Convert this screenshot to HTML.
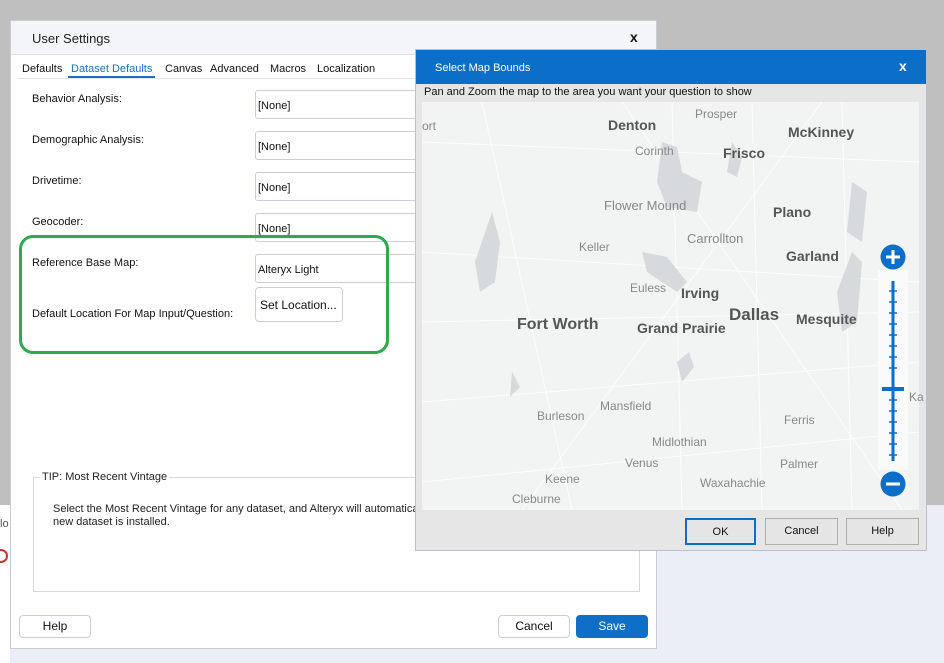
<!DOCTYPE html>
<html><head><meta charset="utf-8"><style>
*{margin:0;padding:0;box-sizing:border-box}
body{width:944px;height:663px;position:relative;overflow:hidden;background:#eceef7;font-family:"Liberation Sans",sans-serif;font-size:11px;color:#111}
.a{position:absolute}
.lbl{position:absolute;left:32px;font-size:11px}
.box{position:absolute;left:255px;width:170px;height:29px;border:1px solid #ccd;border-radius:3px;background:#fff;padding:9px 2px;font-size:11px}
.city{position:absolute;color:#555;font-size:14px;font-weight:bold;white-space:nowrap}
.sm{color:#888;font-weight:normal;font-size:12px}
.btn{position:absolute;height:27px;background:#e5e5e5;border:1px solid #adadad;font-size:11px;text-align:center;line-height:25px}
</style></head><body>
<div class="a" style="left:0;top:0;width:944px;height:505px;background:#bfbfbf"></div>
<div class="a" style="left:0;top:505px;width:10px;height:158px;background:#fff"></div>
<!-- user settings -->
<div class="a" style="left:10px;top:20px;width:647px;height:629px;background:#fff;border:1px solid #c8ccd8"></div>
<div class="a" style="left:11px;top:21px;width:645px;height:34px;background:#f3f5f9;border-bottom:1px solid #dde"></div>
<div class="a" style="left:32px;top:31px;font-size:13px;color:#222">User Settings</div>
<div class="a" style="left:630px;top:29px;font-size:14px;font-weight:bold">x</div>
<div class="a" style="left:17px;top:78px;width:400px;border-top:1px solid #e2e4ea"></div>
<div class="a" style="left:22px;top:63px;font-size:11px">Defaults</div>
<div class="a" style="left:68px;top:63px;font-size:11px;color:#1a6fc4;border-bottom:2px solid #1a6fc4;padding:0 3px 1px">Dataset Defaults</div>
<div class="a" style="left:165px;top:63px;font-size:11px">Canvas</div>
<div class="a" style="left:210px;top:63px;font-size:11px">Advanced</div>
<div class="a" style="left:270px;top:63px;font-size:11px">Macros</div>
<div class="a" style="left:317px;top:63px;font-size:11px">Localization</div>
<div class="lbl" style="top:93px">Behavior Analysis:</div><div class="box" style="top:90px">[None]</div>
<div class="lbl" style="top:134px">Demographic Analysis:</div><div class="box" style="top:131px">[None]</div>
<div class="lbl" style="top:175px">Drivetime:</div><div class="box" style="top:172px">[None]</div>
<div class="lbl" style="top:216px">Geocoder:</div><div class="box" style="top:213px">[None]</div>
<div class="lbl" style="top:257px">Reference Base Map:</div><div class="box" style="top:254px">Alteryx Light</div>
<div class="lbl" style="top:308px">Default Location For Map Input/Question:</div>
<div class="a" style="left:255px;top:287px;width:88px;height:35px;border:1px solid #ccd;border-radius:4px;background:#fff;font-size:12px;padding:10px 4px">Set Location...</div>
<div class="a" style="left:19px;top:235px;width:370px;height:119px;border:3px solid #2bab4a;border-radius:14px"></div>
<div class="a" style="left:33px;top:477px;width:607px;height:115px;border:1px solid #d8d8d8"></div>
<div class="a" style="left:40px;top:471px;background:#fff;padding:0 2px;font-size:11px;color:#222">TIP: Most Recent Vintage</div>
<div class="a" style="left:53px;top:503px;font-size:11px;line-height:13px;color:#222">Select the Most Recent Vintage for any dataset, and Alteryx will automatically<br>new dataset is installed.</div>
<div class="a" style="left:19px;top:615px;width:72px;height:23px;border:1px solid #ccd;border-radius:4px;text-align:center;line-height:21px;font-size:12px">Help</div>
<div class="a" style="left:498px;top:615px;width:72px;height:23px;border:1px solid #ccd;border-radius:4px;text-align:center;line-height:21px;font-size:12px">Cancel</div>
<div class="a" style="left:576px;top:615px;width:72px;height:23px;background:#0f6fc6;border-radius:4px;color:#fff;text-align:center;line-height:23px;font-size:12px">Save</div>
<div class="a" style="left:0;top:518px;font-size:11px;color:#555">lo</div>
<div class="a" style="left:-6px;top:549px;width:14px;height:14px;border:2px solid #c33;border-radius:50%"></div>
<!-- map dialog -->
<div class="a" style="left:415px;top:49px;width:512px;height:502px;background:#e6e6e6;border:1px solid #b8c0d0"></div>
<div class="a" style="left:416px;top:50px;width:510px;height:34px;background:#0b6ec9"></div>
<div class="a" style="left:435px;top:62px;color:#fff;font-size:11px">Select Map Bounds</div>
<div class="a" style="left:899px;top:58px;color:#fff;font-size:14px;font-weight:bold">x</div>
<div class="a" style="left:424px;top:86px;font-size:11px">Pan and Zoom the map to the area you want your question to show</div>
<div class="a" style="left:422px;top:102px;width:497px;height:408px;background:#f2f3f3;overflow:hidden">
<svg width="497" height="408" style="position:absolute;left:0;top:0">
<g stroke="#fff" stroke-width="1" fill="none" opacity="0.8">
<path d="M0 40 L497 60 M0 150 L497 180 M0 300 L497 260 M60 0 L150 408 M250 0 L260 408 M330 0 L340 408 M0 220 L497 210 M100 408 L400 0 M200 0 L480 408 M0 380 L497 330 M420 0 L430 408"/>
</g>
<g fill="#d6dadc">
<path d="M240 40 l15 5 l5 25 l20 10 l-5 30 l-30 -5 l-10 -25 z"/>
<path d="M310 40 l10 15 l-5 20 l-10 -5 z"/>
<path d="M220 150 l25 5 l20 25 l-10 10 l-30 -20 z"/>
<path d="M70 110 l8 30 l-5 40 l-15 10 l-5 -30 z"/>
<path d="M430 80 l15 10 l-5 50 l-15 -10 z"/>
<path d="M430 150 l10 10 l-5 60 l-15 10 l-5 -40 z"/>
<path d="M255 260 l12 -10 l5 15 l-12 15 z"/>
<path d="M90 270 l8 15 l-10 10 z"/>
</g>
</svg>
</div>
<div class="city" style="left:608px;top:117px">Denton</div>
<div class="city sm" style="left:695px;top:107px">Prosper</div>
<div class="city" style="left:788px;top:124px">McKinney</div>
<div class="city sm" style="left:635px;top:144px">Corinth</div>
<div class="city" style="left:723px;top:145px">Frisco</div>
<div class="city sm" style="left:604px;top:198px;font-size:13px">Flower Mound</div>
<div class="city" style="left:773px;top:204px">Plano</div>
<div class="city sm" style="left:687px;top:231px;font-size:13px">Carrollton</div>
<div class="city sm" style="left:579px;top:240px">Keller</div>
<div class="city" style="left:786px;top:248px">Garland</div>
<div class="city sm" style="left:630px;top:281px">Euless</div>
<div class="city" style="left:681px;top:285px">Irving</div>
<div class="city" style="left:729px;top:305px;font-size:17px">Dallas</div>
<div class="city" style="left:796px;top:311px">Mesquite</div>
<div class="city" style="left:517px;top:316px;font-size:16px">Fort Worth</div>
<div class="city" style="left:637px;top:320px">Grand Prairie</div>
<div class="city sm" style="left:600px;top:399px">Mansfield</div>
<div class="city sm" style="left:537px;top:409px">Burleson</div>
<div class="city sm" style="left:784px;top:413px">Ferris</div>
<div class="city sm" style="left:652px;top:435px">Midlothian</div>
<div class="city sm" style="left:625px;top:456px">Venus</div>
<div class="city sm" style="left:780px;top:457px">Palmer</div>
<div class="city sm" style="left:545px;top:472px">Keene</div>
<div class="city sm" style="left:700px;top:476px">Waxahachie</div>
<div class="city sm" style="left:512px;top:492px">Cleburne</div>
<div class="city sm" style="left:422px;top:119px">ort</div>
<div class="city sm" style="left:909px;top:390px">Ka</div>
<div class="a" style="left:878px;top:270px;width:30px;height:200px;background:#fafafa"></div>
<svg class="a" style="left:878px;top:243px" width="32" height="256">
<circle cx="15" cy="14" r="12.5" fill="#0b6ec9"/><path d="M8 14h14M15 7v14" stroke="#fff" stroke-width="3"/>
<path d="M15 38V218" stroke="#0b6ec9" stroke-width="3"/>
<g stroke="#0b6ec9" stroke-width="1.5"><path d="M11 48h8M11 59h8M11 70h8M11 81h8M11 92h8M11 103h8M11 114h8M11 125h8M11 157h8M11 168h8M11 179h8M11 190h8M11 201h8M11 212h8"/></g>
<path d="M4 146h22" stroke="#0b6ec9" stroke-width="4"/>
<circle cx="15" cy="241" r="12.5" fill="#0b6ec9"/><path d="M8 241h14" stroke="#fff" stroke-width="3"/>
</svg>
<div class="btn" style="left:685px;top:518px;width:71px;border:2px solid #0b6ec9">OK</div>
<div class="btn" style="left:765px;top:518px;width:73px">Cancel</div>
<div class="btn" style="left:846px;top:518px;width:73px">Help</div>
</body></html>
